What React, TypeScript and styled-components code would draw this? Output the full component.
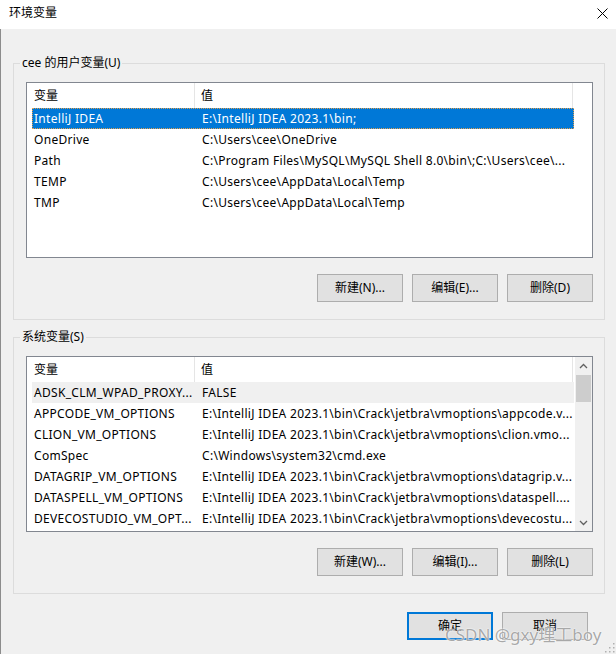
import React from "react";
import styled, { createGlobalStyle } from "styled-components";

const Global = createGlobalStyle`
  html, body { margin: 0; padding: 0; background: #f0f0f0; }
  body { font-family: "Noto Sans", "Noto Sans CJK SC", sans-serif; font-size: 12px; color: #000; }
  * { box-sizing: border-box; }
`;

const Window = styled.div`
  position: relative;
  width: 616px;
  height: 654px;
  display: flex;
  flex-direction: column;
  overflow: hidden;
  background: #f0f0f0;
`;

const TitleBar = styled.div`
  height: 29px;
  flex: none;
  background: #ffffff;
  display: flex;
  align-items: center;
  justify-content: space-between;
  padding: 0 9px 0 9px;
`;

const Title = styled.div`
  font-size: 12px;
  line-height: 16px;
  margin-top: -3px;
`;

const CloseIcon = styled.svg`
  width: 11px;
  height: 11px;
  margin-top: -3px;
  margin-right: -1px;
`;

const Body = styled.div`
  flex: 1;
  border-left: 1px solid #8c8c8c;
  padding: 0 11px 0 12px;
  display: flex;
  flex-direction: column;
`;

const Group = styled.fieldset<{ $top: number }>`
  margin: ${(p) => p.$top}px 0 0 0;
  padding: 11px 11px 17px 12px;
  border: 1px solid #dcdcdc;
  min-width: 0;
  display: flex;
  flex-direction: column;
`;

const Legend = styled.legend`
  margin-left: -6px;
  padding: 0 2px;
  font-size: 12px;
  line-height: 16px;
  color: #000;
`;

const List = styled.div`
  height: 176px;
  border: 1px solid #828790;
  background: #ffffff;
  display: flex;
  overflow: hidden;
`;

const ListMain = styled.div`
  flex: 1;
  min-width: 0;
  display: flex;
  flex-direction: column;
`;

const Header = styled.div<{ $trail: boolean }>`
  height: 25px;
  flex: none;
  display: grid;
  grid-template-columns: 168px 378px ${(p) => (p.$trail ? "1fr" : "0")};
  background: #ffffff;
`;

const HeadCell = styled.div<{ $pad: number }>`
  display: flex;
  align-items: center;
  padding-left: ${(p) => p.$pad}px;
  border-right: 1px solid #e5e5e5;
  line-height: 16px;
  white-space: nowrap;
  overflow: hidden;
`;

const HeadFill = styled.div``;

const Rows = styled.div`
  padding-left: 5px;
  display: flex;
  flex-direction: column;
`;

const Row = styled.div<{ $state?: "sel" | "soft" }>`
  width: 542px;
  height: 21px;
  display: grid;
  grid-template-columns: 168px 1fr;
  align-items: center;
  background: ${(p) =>
    p.$state === "sel" ? "#0078d7" : p.$state === "soft" ? "#f0f0f0" : "transparent"};
  color: ${(p) => (p.$state === "sel" ? "#ffffff" : "#000000")};
  outline: ${(p) => (p.$state === "sel" ? "1px dotted #e0a050" : "none")};
  outline-offset: -1px;
`;

const Cell = styled.div`
  padding-left: 2px;
  white-space: nowrap;
  overflow: hidden;
  line-height: 16px;
  letter-spacing: 0.3px;
`;

const ScrollBar = styled.div`
  width: 17px;
  flex: none;
  background: #f0f0f0;
  display: flex;
  flex-direction: column;
`;

const ScrollArrow = styled.div`
  height: 17px;
  flex: none;
  display: flex;
  align-items: center;
  justify-content: center;
`;

const ScrollTrack = styled.div`
  flex: 1;
  padding: 1px 1px 0 1px;
`;

const Thumb = styled.div`
  height: 27px;
  background: #cdcdcd;
`;

const ButtonRow = styled.div<{ $top: number; $right?: number }>`
  display: flex;
  justify-content: flex-end;
  gap: 9px;
  margin-top: ${(p) => p.$top}px;
  margin-right: ${(p) => p.$right ?? 0}px;
`;

const Button = styled.div<{ $primary?: boolean }>`
  width: 86px;
  height: 28px;
  display: flex;
  align-items: center;
  justify-content: center;
  background: #e1e1e1;
  border: ${(p) => (p.$primary ? "2px solid #0078d7" : "1px solid #adadad")};
  font-size: 12px;
  line-height: 16px;
  color: #000;
`;

const Watermark = styled.div`
  position: absolute;
  left: 445px;
  top: 624px;
  font-size: 17px;
  line-height: 22px;
  color: rgba(140, 140, 140, 0.75);
  text-shadow: 0 0 1px #ffffff, 0 0 2px #ffffff;
  white-space: nowrap;
`;

const Grip = styled.svg`
  position: absolute;
  right: 1px;
  bottom: 1px;
  width: 12px;
  height: 12px;
`;

type R = [string, string];

const userVars: R[] = [
  ["IntelliJ IDEA", "E:\\IntelliJ IDEA 2023.1\\bin;"],
  ["OneDrive", "C:\\Users\\cee\\OneDrive"],
  ["Path", "C:\\Program Files\\MySQL\\MySQL Shell 8.0\\bin\\;C:\\Users\\cee\\..."],
  ["TEMP", "C:\\Users\\cee\\AppData\\Local\\Temp"],
  ["TMP", "C:\\Users\\cee\\AppData\\Local\\Temp"],
];

const sysVars: R[] = [
  ["ADSK_CLM_WPAD_PROXY...", "FALSE"],
  ["APPCODE_VM_OPTIONS", "E:\\IntelliJ IDEA 2023.1\\bin\\Crack\\jetbra\\vmoptions\\appcode.v..."],
  ["CLION_VM_OPTIONS", "E:\\IntelliJ IDEA 2023.1\\bin\\Crack\\jetbra\\vmoptions\\clion.vmo..."],
  ["ComSpec", "C:\\Windows\\system32\\cmd.exe"],
  ["DATAGRIP_VM_OPTIONS", "E:\\IntelliJ IDEA 2023.1\\bin\\Crack\\jetbra\\vmoptions\\datagrip.v..."],
  ["DATASPELL_VM_OPTIONS", "E:\\IntelliJ IDEA 2023.1\\bin\\Crack\\jetbra\\vmoptions\\dataspell...."],
  ["DEVECOSTUDIO_VM_OPT...", "E:\\IntelliJ IDEA 2023.1\\bin\\Crack\\jetbra\\vmoptions\\devecostu..."],
];

const Chevron: React.FC<{ up?: boolean }> = ({ up }) => (
  <svg width="9" height="6" viewBox="0 0 9 6">
    <path
      d={up ? "M1 5 L4.5 1.5 L8 5" : "M1 1 L4.5 4.5 L8 1"}
      fill="none"
      stroke="#606060"
      strokeWidth="1.3"
    />
  </svg>
);

export default function App() {
  return (
    <>
      <Global />
      <Window>
        <TitleBar>
          <Title>环境变量</Title>
          <CloseIcon viewBox="0 0 11 11">
            <path d="M0.5 0.5 L10.5 10.5 M10.5 0.5 L0.5 10.5" stroke="#000" strokeWidth="1" />
          </CloseIcon>
        </TitleBar>
        <Body>
          <Group $top={26}>
            <Legend>cee 的用户变量(U)</Legend>
            <List>
              <ListMain>
                <Header $trail>
                  <HeadCell $pad={7}>变量</HeadCell>
                  <HeadCell $pad={6}>值</HeadCell>
                  <HeadFill />
                </Header>
                <Rows>
                  {userVars.map(([n, v], i) => (
                    <Row key={n} $state={i === 0 ? "sel" : undefined}>
                      <Cell>{n}</Cell>
                      <Cell>{v}</Cell>
                    </Row>
                  ))}
                </Rows>
              </ListMain>
            </List>
            <ButtonRow $top={16}>
              <Button>新建(N)...</Button>
              <Button>编辑(E)...</Button>
              <Button>删除(D)</Button>
            </ButtonRow>
          </Group>
          <Group $top={9}>
            <Legend>系统变量(S)</Legend>
            <List>
              <ListMain>
                <Header $trail={false}>
                  <HeadCell $pad={7}>变量</HeadCell>
                  <HeadCell $pad={6}>值</HeadCell>
                  <HeadFill />
                </Header>
                <Rows>
                  {sysVars.map(([n, v], i) => (
                    <Row key={n} $state={i === 0 ? "soft" : undefined}>
                      <Cell>{n}</Cell>
                      <Cell>{v}</Cell>
                    </Row>
                  ))}
                </Rows>
              </ListMain>
              <ScrollBar>
                <ScrollArrow>
                  <Chevron up />
                </ScrollArrow>
                <ScrollTrack>
                  <Thumb />
                </ScrollTrack>
                <ScrollArrow>
                  <Chevron />
                </ScrollArrow>
              </ScrollBar>
            </List>
            <ButtonRow $top={16}>
              <Button>新建(W)...</Button>
              <Button>编辑(I)...</Button>
              <Button>删除(L)</Button>
            </ButtonRow>
          </Group>
          <ButtonRow $top={18} $right={17}>
            <Button $primary>确定</Button>
            <Button>取消</Button>
          </ButtonRow>
        </Body>
        <Watermark>CSDN @gxy理工boy</Watermark>
        <Grip viewBox="0 0 12 12">
          {[
            [10, 2],
            [10, 6],
            [6, 6],
            [10, 10],
            [6, 10],
            [2, 10],
          ].map(([x, y]) => (
            <rect key={`${x}-${y}`} x={x} y={y} width="1.5" height="1.5" fill="#b0b0b0" />
          ))}
        </Grip>
      </Window>
    </>
  );
}
